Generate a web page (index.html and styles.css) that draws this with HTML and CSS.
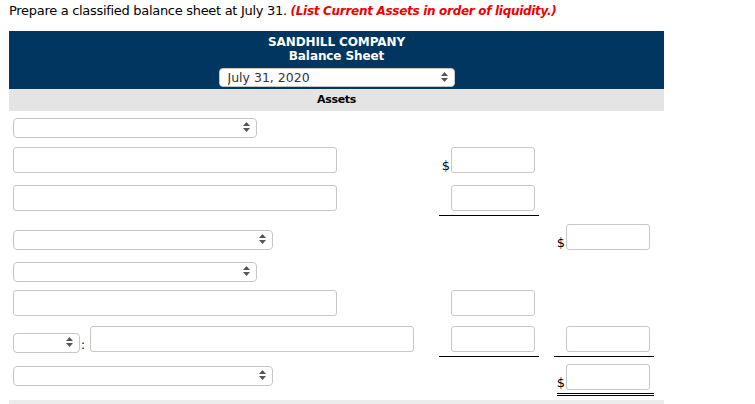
FILE: index.html
```html
<!DOCTYPE html>
<html>
<head>
<meta charset="utf-8">
<link rel="stylesheet" href="styles.css">
</head>
<body>
<p class="prompt">Prepare a classified balance sheet at July 31. <em class="hint">(List Current Assets in order of liquidity.)</em></p>
<div class="sheet">
  <div class="head">
    <div class="co">SANDHILL COMPANY</div>
    <div class="co">Balance Sheet</div>
    <span class="sel sel-date"><select><option>July 31, 2020</option></select><svg class="arr" width="7" height="10" viewBox="0 0 7 10"><path d="M3.5 0 L7 4 L0 4 Z M0 6 L7 6 L3.5 10 Z" fill="#555"/></svg></span>
  </div>
  <div class="section">Assets</div>

  <div class="row r1">
    <div class="c1"><span class="sel w244"><select></select><svg class="arr" width="7" height="10" viewBox="0 0 7 10"><path d="M3.5 0 L7 4 L0 4 Z M0 6 L7 6 L3.5 10 Z" fill="#555"/></svg></span></div>
  </div>

  <div class="row r2">
    <div class="c1"><input class="txt w324" type="text"></div>
    <div class="amt"><span class="cur">$</span><input class="num" type="text"></div>
  </div>

  <div class="row r3">
    <div class="c1"><input class="txt w324" type="text"></div>
    <div class="amt under"><input class="num" type="text"></div>
  </div>

  <div class="row r4">
    <div class="c1"><span class="sel w260"><select></select><svg class="arr" width="7" height="10" viewBox="0 0 7 10"><path d="M3.5 0 L7 4 L0 4 Z M0 6 L7 6 L3.5 10 Z" fill="#555"/></svg></span></div>
    <div class="amt"></div>
    <div></div>
    <div class="amt"><span class="cur">$</span><input class="num" type="text"></div>
  </div>

  <div class="row r5">
    <div class="c1"><span class="sel w244"><select></select><svg class="arr" width="7" height="10" viewBox="0 0 7 10"><path d="M3.5 0 L7 4 L0 4 Z M0 6 L7 6 L3.5 10 Z" fill="#555"/></svg></span></div>
  </div>

  <div class="row r6">
    <div class="c1"><input class="txt w324" type="text"></div>
    <div class="amt"><input class="num" type="text"></div>
  </div>

  <div class="row r7">
    <div class="c1 combo"><span class="sel w67"><select></select><svg class="arr" width="7" height="10" viewBox="0 0 7 10"><path d="M3.5 0 L7 4 L0 4 Z M0 6 L7 6 L3.5 10 Z" fill="#555"/></svg></span><span class="colon">:</span><input class="txt w324" type="text"></div>
    <div class="amt under"><input class="num" type="text"></div>
    <div></div>
    <div class="amt under"><input class="num" type="text"></div>
  </div>

  <div class="row r8">
    <div class="c1"><span class="sel w260"><select></select><svg class="arr" width="7" height="10" viewBox="0 0 7 10"><path d="M3.5 0 L7 4 L0 4 Z M0 6 L7 6 L3.5 10 Z" fill="#555"/></svg></span></div>
    <div class="amt"></div>
    <div></div>
    <div class="amt dbl"><span class="cur">$</span><input class="num" type="text"></div>
  </div>
  <div class="foot"></div>
</div>
</body>
</html>
```
FILE: styles.css
```css
* { box-sizing: border-box; }
html, body { margin: 0; padding: 0; background: #fff; }
body {
  font-family: "DejaVu Sans", Verdana, sans-serif;
  color: #000;
  width: 755px;
  height: 404px;
  overflow: hidden;
}
.prompt {
  margin: 0;
  padding: 3px 9px 0;
  height: 31px;
  font-size: 13px;
  line-height: 16px;
  letter-spacing: -0.3px;
}
.hint {
  color: #ee0000;
  font-size: 12px;
  font-weight: bold;
  font-style: italic;
  letter-spacing: -0.3px;
}
.sheet {
  margin-left: 9px;
  width: 655px;
}
.head {
  background: #003660;
  height: 58px;
  padding-top: 4px;
  display: flex;
  flex-direction: column;
  align-items: center;
}
.co {
  color: #fff;
  font-weight: bold;
  font-size: 12px;
  line-height: 14px;
  letter-spacing: -0.1px;
}
.sel {
  position: relative;
  display: inline-block;
  height: 20px;
}
.sel select {
  -webkit-appearance: none;
  appearance: none;
  width: 100%;
  height: 100%;
  margin: 0;
  border: 1px solid #c6c6c6;
  border-radius: 4px;
  background: #fff;
  font-family: "DejaVu Sans", Verdana, sans-serif;
  font-size: 12.5px;
  color: #333;
  padding: 0 0 0 8px;
  outline: none;
}
.sel .arr {
  position: absolute;
  right: 7px;
  top: 5px;
}
.sel-date {
  width: 236px;
  height: 19px;
  margin-top: 4px;
}
.section {
  background: #e4e4e4;
  height: 22px;
  text-align: center;
  font-weight: bold;
  font-size: 11px;
  line-height: 22px;
  letter-spacing: -0.3px;
}
.row {
  display: grid;
  grid-template-columns: 430px 100px 15px 100px;
  align-items: start;
}
.c1 { padding-left: 4px; display: flex; }
.combo { align-items: flex-end; }
.w244 { width: 244px; }
.w260 { width: 260px; }
.w67 { width: 67px; }
.w324 { width: 324px; }
.txt, .num {
  height: 26px;
  margin: 0;
  border: 1px solid #c8c8c8;
  border-radius: 3px;
  background: #fff;
  outline: none;
  padding: 0 4px;
  font-family: "DejaVu Sans", Verdana, sans-serif;
  font-size: 12px;
}
.num { width: 84px; }
.colon {
  width: 10px;
  font-size: 12px;
  line-height: 14px;
  padding-left: 1px;
}
.amt {
  display: flex;
  justify-content: flex-end;
  align-items: flex-end;
  padding-right: 4px;
}
.cur {
  font-size: 13px;
  line-height: 15px;
  margin-right: 1px;
}
.under {
  border-bottom: 1px solid #000;
  padding-bottom: 4px;
}
.dbl {
  border-bottom: 3px double #000;
  padding-bottom: 3px;
  margin-left: 3px;
}
.r1 { height: 31px; padding-top: 6px; }
.r2 { height: 35px; padding-top: 5px; }
.r3 { height: 40px; padding-top: 8px; }
.r4 { height: 35px; padding-top: 5px; align-items: center; }
.r4 .c1 { padding-top: 4px; }
.r5 { height: 33px; padding-top: 9px; }
.r6 { height: 35px; padding-top: 5px; }
.r7 { height: 38px; padding-top: 6px; }
.r8 { height: 40px; padding-top: 6px; }
.r8 .c1 { padding-top: 1px; }
.foot {
  height: 6px;
  margin-top: 2px;
  background: #ececec;
}
```
